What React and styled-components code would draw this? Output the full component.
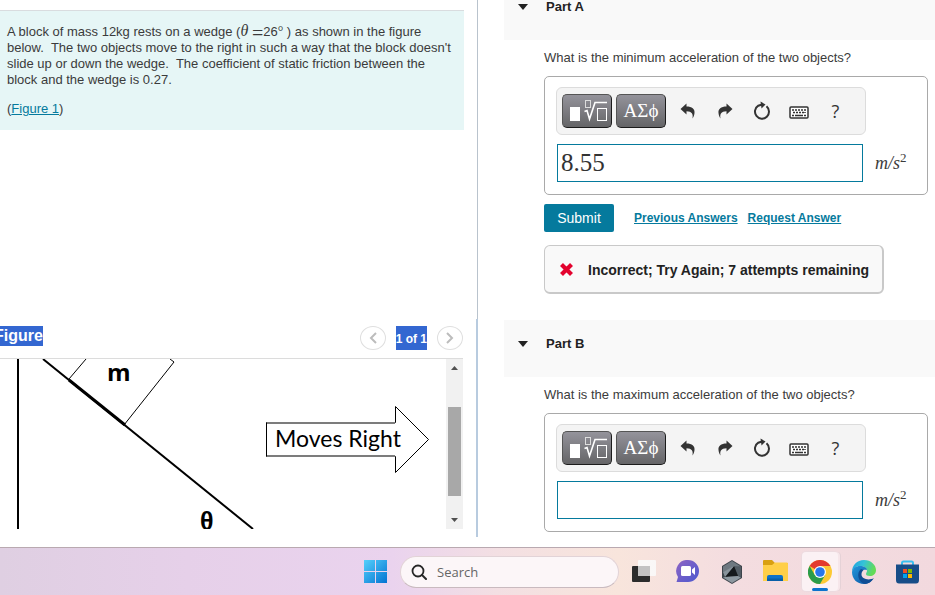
import React from "react";
import styled, { createGlobalStyle } from "styled-components";

const GlobalStyle = createGlobalStyle`
* {
  box-sizing: border-box;
}

body {
  margin: 0;
  background: #fff;
  color: #3b3b3b;
  font-family: "Liberation Sans", Arial, sans-serif;
  font-size: 13px;
  line-height: 16px;
}

button, input {
  font-family: inherit;
}
`;

const Page = styled.div`
display: flex;
flex-direction: column;
min-height: 100vh;
`;

const Main = styled.main`
flex: 1;
display: grid;
grid-template-columns: minmax(0, 478fr) minmax(0, 457fr);
overflow: hidden;
`;

/* ---------- left column ---------- */

const LeftColumn = styled.div`
display: flex;
flex-direction: column;
padding-bottom: 10px;
`;

const ProblemArea = styled.div`
flex: 1;
padding: 10px 13px 0 0;
border-right: 1px solid #b9c3cd;
`;

const Problem = styled.section`
padding: 13px 6px 13px 7px;
border-top: 1px solid #d9dcdf;
background: #e6f6f6;
white-space: pre-wrap;

p {
  margin: 0 0 13px;
}

p:last-child {
  margin: 0;
}
`;

const MathText = styled.span`
font-family: "Liberation Serif", serif;
font-size: 16px;
line-height: 0;
font-style: ${({$italic}) => ($italic ? "italic" : "normal")};
`;

const MathOperator = styled(MathText)`
font-size: 20px;
vertical-align: middle;
`;

const Degree = styled(MathText)`
font-size: 14px;
`;

const TextLink = styled.a`
color: #057a9d;
font-size: ${({$bold}) => ($bold ? "12px" : "inherit")};
font-weight: ${({$bold}) => ($bold ? "bold" : "normal")};
text-decoration: underline;
`;

const FigurePanel = styled.section`
padding: 0 13px 8px 0;
border-right: 2px solid #b8cbdf;
`;

const FigureHeader = styled.div`
display: flex;
justify-content: space-between;
align-items: flex-start;
height: 40px;
padding-top: 7px;
border-bottom: 1px solid #dcdcdc;
overflow: hidden;
`;

const FigureTitle = styled.h2`
margin: 0 0 0 -6px;
background: #3367d1;
color: #fff;
font-size: 16px;
line-height: 20px;
`;

const Pager = styled.div`
display: flex;
gap: 10px;
`;

const PagerButton = styled.button`
display: flex;
align-items: center;
justify-content: center;
width: 26px;
height: 24px;
padding: 0;
border: 1px solid #dfdfdf;
border-radius: 50%;
background: #fff;
color: #bcbcbc;
`;

const PagerCount = styled.span`
padding-top: 2px;
background: #3367d1;
color: #fff;
font-size: 12px;
font-weight: bold;
line-height: 22px;
`;

const FigureView = styled.div`
display: flex;
height: 170px;

> svg {
  flex: 1;
  min-width: 0;
}
`;

const Scrollbar = styled.div`
display: flex;
flex-direction: column;
align-items: center;
justify-content: space-between;
width: 17px;
padding: 7px 0;
background: #f1f1f1;
`;

const ScrollThumb = styled.div`
width: 13px;
height: 89px;
margin-top: 14px;
background: #a8a8a8;
`;

/* ---------- right column ---------- */

// the column is scrolled a little past the top of part A
const RightColumn = styled.div`
margin-top: -17px;
padding: 0 0 10px 26px;
`;

const PartHeader = styled.header`
display: flex;
align-items: center;
gap: 18px;
height: 57px;
padding: 0 0 10px 14px;
background: #f9f9f9;

h2 {
  margin: 0;
  color: #222;
  font-size: 13px;
}
`;

const PartBody = styled.div`
padding: 10px 7px 0 40px;
margin-bottom: ${({$last}) => ($last ? "0" : "26px")};
`;

const Question = styled.p`
margin: 0 0 10px;
`;

const AnswerBox = styled.div`
padding: 10px 18px 12px 11px;
border: 1px solid #a9a9a9;
border-radius: 5px;
`;

const Toolbar = styled.div`
display: flex;
align-items: center;
max-width: 310px;
height: 48px;
padding: 0 5px;
border: 1px solid #dcdcdc;
border-radius: 6px;
background: #f4f4f4;
`;

const Palettes = styled.div`
display: flex;
gap: 4px;
margin-right: 3px;
`;

const PaletteButton = styled.button`
display: flex;
align-items: center;
justify-content: center;
width: 50px;
height: 34px;
padding: 0;
border: 1px solid #1b1b1b;
border-top-color: #555;
border-left-color: #555;
border-radius: 5px;
background: linear-gradient(#94939b, #656567);
color: #fff;
font-family: "Liberation Serif", serif;
font-size: 19px;
`;

const ToolButton = styled.button`
display: flex;
align-items: center;
justify-content: center;
width: 37px;
height: 34px;
padding: 0;
border: 0;
background: none;
color: #333;
font-family: "Open Sans", sans-serif;
font-size: 18px;
font-weight: 500;
`;

const AnswerRow = styled.div`
display: flex;
align-items: center;
gap: 12px;
margin: 9px 0 0 1px;
`;

const AnswerInput = styled.input`
flex: 1;
min-width: 0;
height: 38px;
padding: 0 3px;
border: 1px solid #057a9d;
background: #fff;
color: #333;
font-family: "Liberation Serif", serif;
font-size: 25px;
`;

const Unit = styled.label`
width: 34px;
font-family: "Liberation Serif", serif;
font-size: 18px;
font-style: italic;
white-space: nowrap;

sup {
  font-size: 13px;
  font-style: normal;
  line-height: 0;
}
`;

const Actions = styled.div`
display: flex;
align-items: center;
gap: 10px;
margin-top: 9px;
`;

const SubmitButton = styled.button`
width: 70px;
height: 28px;
margin-right: 10px;
padding: 0;
border: 0;
border-radius: 2px;
background: #057a9d;
color: #fff;
font-size: 14px;
`;

const Feedback = styled.div`
display: inline-flex;
align-items: center;
gap: 14px;
height: 49px;
margin-top: 13px;
padding: 1px 13px 0 14px;
border: 1px solid #c9c9c9;
border-right-width: 2px;
border-bottom-width: 2px;
border-radius: 6px;
background: #f9f9f9;
color: #222;
font-size: 14px;
font-weight: bold;
`;

/* ---------- taskbar ---------- */

const Taskbar = styled.nav`
display: flex;
align-items: center;
justify-content: flex-end;
height: 48px;
padding-right: 5px;
border-top: 1px solid #b9a9b0;
background: linear-gradient(90deg, #dfcfe2 0%, #e6d0e9 20%, #ead3ee 42%, #f3dfe3 53%, #f8e5dc 66%, #f4dde0 78%, #f2d9de 100%);
`;

const SearchPill = styled.label`
display: flex;
align-items: center;
gap: 10px;
width: 219px;
height: 32px;
margin: 0 3px 0 2px;
padding: 0 10px;
border: 1px solid #e2d3d7;
border-bottom-color: #c9babf;
border-radius: 16px;
background: #fcf6f8;

svg {
  flex: none;
}

input {
  width: 100%;
  padding: 0;
  border: 0;
  outline: 0;
  background: none;
  font-family: "Open Sans", sans-serif;
  font-size: 13px;
}

input::placeholder {
  color: #666;
  opacity: 1;
}
`;

const TaskButton = styled.button`
display: flex;
align-items: center;
justify-content: center;
width: 44px;
height: 40px;
padding: 0;
border: 0;
background: none;
`;

const ActiveTask = styled.span`
display: flex;
flex-direction: column;
align-items: center;
justify-content: flex-end;
gap: 4px;
width: 36px;
height: 39px;
border-radius: 4px;
background: #fbf1f4;
box-shadow: 2px 0 0 #f6e6ea, 3px 0 0 #e5d2d7, 0 0 1px 1px #ecdbe0;
`;

const ActiveMark = styled.span`
width: 16px;
height: 3px;
border-radius: 2px;
background: #0b73cd;
`;

const Caret = ({up, small}) => (
  <svg width={small ? 7 : 10} height={small ? 4 : 6} viewBox="0 0 10 6" preserveAspectRatio="none">
    <path d={up ? "M0 6L5 0L10 6Z" : "M0 0H10L5 6Z"} fill={small ? "#505050" : "#222"} />
  </svg>
);

const Chevron = ({d}) => (
  <svg width="8" height="12" viewBox="0 0 8 12">
    <path d={d} fill="none" stroke="currentColor" strokeWidth="2" />
  </svg>
);

const RootIcon = () => (
  <svg width="40" height="24" viewBox="0 0 40 24">
    <rect x="3" y="8" width="10" height="14" fill="#fff" />
    <path d="M17.500 12.500L20 11.500L22.500 20L28 3.500H40" fill="none" stroke="#fff" strokeWidth="1.600" />
    <rect x="18.500" y="1.500" width="5" height="7" fill="none" stroke="#ddd" />
    <rect x="30.500" y="9.500" width="9" height="12" fill="none" stroke="#fff" />
  </svg>
);

const UndoIcon = ({flip}) => (
  <svg width="16" height="16" viewBox="0 0 16 16">
    <g transform={flip ? "matrix(-1 0 0 1 16 0)" : undefined}>
      <path d="M0.500 6L6.500 0.500V3.500C12 3.500 15 6 14.500 10C14.300 12 13.600 14 12.500 15.500C13.300 11 12 8.500 6.500 8.300V11.500Z" fill="currentColor" />
    </g>
  </svg>
);

const ResetIcon = () => (
  <svg width="18" height="20" viewBox="0 0 18 20">
    <path d="M13.500 5.300A7 7 0 1 1 5.300 4.700L9 3.500" fill="none" stroke="currentColor" strokeWidth="2" />
    <path d="M7.500 0.500L12.500 3.500L8.500 7.500Z" fill="currentColor" />
  </svg>
);

const KeyboardIcon = () => (
  <svg width="20" height="18" viewBox="0 0 20 18">
    <rect x="1" y="5" width="18" height="11" rx="1" fill="#fff" stroke="currentColor" strokeWidth="1.500" />
    <path d="M3 8H15M4 10.500H16M16 7V11" stroke="currentColor" strokeWidth="1.500" strokeDasharray="2 1" />
    <path d="M3 13.500H5M6 13.500H14M15 13.500H17" stroke="currentColor" strokeWidth="1.500" />
  </svg>
);

const CrossIcon = () => (
  <svg width="15" height="15" viewBox="0 0 15 15">
    <path d="M2.500 2.500L12.500 12.500M12.500 2.500L2.500 12.500" stroke="#e3032e" strokeWidth="4.200" />
  </svg>
);

const WedgeFigure = () => (
  <svg height="170" viewBox="0 0 446 170" preserveAspectRatio="xMinYMin slice" role="img" aria-label="Block on a wedge">
    <path d="M18 0V170" stroke="#000" strokeWidth="2" />
    <path d="M43 0L253 170" stroke="#000" strokeWidth="2" />
    <path d="M69 21L125 66" stroke="#000" strokeWidth="3" />
    <path d="M69 20L86 0M124 66L174 3L170 0" fill="none" stroke="#000" />
    <path d="M266.500 63.500H395.500V47.500L428.500 80.500L395.500 113.500V97.500H266.500Z" fill="#fff" stroke="#000" />
    <path d="M267 64H395M267 97H395" stroke="#7c7c7c" strokeWidth="2" />
    <text x="275" y="88" fontFamily="Lato" fontSize="23">Moves Right</text>
    <text x="107" y="22" fontFamily="Open Sans" fontSize="24" fontWeight="bold">m</text>
    <text x="200" y="171" fontFamily="Liberation Sans" fontSize="25" fontWeight="bold">θ</text>
  </svg>
);

const WindowsIcon = () => (
  <svg width="24" height="24" viewBox="0 0 24 24">
    <defs>
      <linearGradient id="win" x1="0" y1="0" x2="24" y2="24" gradientUnits="userSpaceOnUse">
        <stop stopColor="#55d0fb" />
        <stop offset="1" stopColor="#006fd0" />
      </linearGradient>
    </defs>
    <path d="M0 0H11V11H0ZM12 0H23V11H12ZM0 12H11V23H0ZM12 12H23V23H12Z" fill="url(#win)" />
  </svg>
);

const SearchIcon = () => (
  <svg width="16" height="16" viewBox="0 0 16 16">
    <circle cx="7" cy="7" r="5.500" fill="none" stroke="#262626" strokeWidth="1.800" />
    <path d="M11 11L15 15" stroke="#262626" strokeWidth="2" strokeLinecap="round" />
  </svg>
);

const TaskViewIcon = () => (
  <svg width="24" height="24" viewBox="0 0 24 24">
    <rect x="0" y="6" width="18" height="16" rx="1" fill="#2c2c2c" />
    <rect x="6" y="0" width="18" height="16" rx="1" fill="#fafafa" fillOpacity=".9" />
    <rect x="6" y="6" width="12" height="10" fill="#c3c2c2" />
  </svg>
);

const ChatIcon = () => (
  <svg width="24" height="24" viewBox="0 0 24 24">
    <defs>
      <linearGradient id="chat" x1="0" y1="0" x2="1" y2="1">
        <stop stopColor="#8f64c4" />
        <stop offset="1" stopColor="#4b58cf" />
      </linearGradient>
    </defs>
    <path d="M12 0A11 11 0 1 1 12 22H0.500L2 17A11 11 0 0 1 12 0Z" fill="url(#chat)" />
    <rect x="5" y="6" width="10" height="10" rx="1.500" fill="#fff" />
    <path d="M16 9.500L19 7V15L16 12.500Z" fill="#fff" />
  </svg>
);

const HexIcon = () => (
  <svg width="24" height="24" viewBox="0 0 24 24">
    <path d="M12 0L22 6V18L12 24L2 18V6Z" fill="#3d444b" />
    <path d="M12 1L21 6.500L14 7L3 12V6.500Z" fill="#6f7981" />
    <path d="M14 6L21 7V17L18 16Z" fill="#525c64" />
    <path d="M14 6L18 16L5 17Z" fill="#15191c" />
    <path d="M3 17.500L5 17L18 16L21 17.500L12 23Z" fill="#8d98a0" />
    <path d="M5 17L14 6L3 12Z" fill="#88939b" />
  </svg>
);

const FolderIcon = () => (
  <svg width="26" height="24" viewBox="0 0 26 24">
    <path d="M0 1Q0 0 1 0H9L12 3H24Q25 3 25 4V9H0Z" fill="#d9a011" />
    <path d="M0 5H9L12 2.500H24Q25 2.500 25 4V21H0Z" fill="#ffcf48" />
    <path d="M4 21V17Q4 15 6 15H18Q20 15 20 17V21Z" fill="#0d72c9" />
    <path d="M4 21V18.500H20V21Z" fill="#075fa8" />
  </svg>
);

const ChromeIcon = () => (
  <svg width="24" height="24" viewBox="0 0 24 24">
    <circle cx="12" cy="12" r="12" fill="#fcc934" />
    <path d="M12 12L1.600 6A12 12 0 0 1 22.400 6H12Z" fill="#e33b2e" />
    <path d="M1.600 6A12 12 0 0 0 12 24L17.200 15L12 12L6.800 15Z" fill="#2a9c4b" />
    <circle cx="12" cy="12" r="6" fill="#fff" />
    <circle cx="12" cy="12" r="4.800" fill="#2977ec" />
  </svg>
);

const EdgeIcon = () => (
  <svg width="24" height="24" viewBox="0 0 24 24">
    <defs>
      <linearGradient id="edgeTop" x1="0" y1="0" x2="1" y2="0.300">
        <stop stopColor="#1c9de0" />
        <stop offset="0.500" stopColor="#35c3d8" />
        <stop offset="1" stopColor="#63db57" />
      </linearGradient>
      <linearGradient id="edgeLow" x1="0" y1="0" x2="1" y2="1">
        <stop stopColor="#2297db" />
        <stop offset="1" stopColor="#0c51a0" />
      </linearGradient>
    </defs>
    <path d="M0 12C0 5 5 0 12 0C19 0 24 5 24 10C24 14 21 16 18 16C15 16 14 15 14 14C14 13 15 12 15 11C15 8 12 6 8 6C4 6 1 9 0 12Z" fill="url(#edgeTop)" />
    <path d="M0 12C1 8 4 6 8 6C12 6 15 8 15 10C12 9 8 11 8 15C8 20 14 22 21 19C19 22 16 24 12 24C5 24 0 19 0 12Z" fill="url(#edgeLow)" />
    <path d="M9 9C4 13 6 22 13 24C16.500 23.500 20 21.500 22 18C17 21 9 19 9.500 14C9.600 12 10.500 11 11.500 10Z" fill="#104d94" />
  </svg>
);

const StoreIcon = () => (
  <svg width="24" height="24" viewBox="0 0 24 24">
    <path d="M6 5V3Q6 1.500 7.500 1.500H15.500Q17 1.500 17 3V5" fill="none" stroke="#38bff0" strokeWidth="2" />
    <path d="M0 4.500H23V20Q23 23.500 20 23.500H3Q0 23.500 0 20Z" fill="#174d88" />
    <path d="M7 9H11V13H7Z" fill="#f25022" />
    <path d="M12 9H16V13H12Z" fill="#7fba00" />
    <path d="M7 14H11V18H7Z" fill="#00a4ef" />
    <path d="M12 14H16V18H12Z" fill="#ffb900" />
  </svg>
);

const AnswerEditor = ({id, value}) => {
  return (
    <AnswerBox>
      <Toolbar>
        <Palettes>
          <PaletteButton aria-label="Templates"><RootIcon /></PaletteButton>
          <PaletteButton aria-label="Symbols">ΑΣϕ</PaletteButton>
        </Palettes>
        <ToolButton aria-label="Undo"><UndoIcon /></ToolButton>
        <ToolButton aria-label="Redo"><UndoIcon flip /></ToolButton>
        <ToolButton aria-label="Reset"><ResetIcon /></ToolButton>
        <ToolButton aria-label="Keyboard shortcuts"><KeyboardIcon /></ToolButton>
        <ToolButton aria-label="Help">?</ToolButton>
      </Toolbar>
      <AnswerRow>
        <AnswerInput id={id} type="text" defaultValue={value} />
        <Unit htmlFor={id}>m/s<sup>2</sup></Unit>
      </AnswerRow>
    </AnswerBox>
  );
};

const Part = ({title, question, id, value, last, children}) => {
  return (
    <section>
      <PartHeader>
        <Caret />
        <h2>{title}</h2>
      </PartHeader>
      <PartBody $last={last}>
        <Question>{question}</Question>
        <AnswerEditor id={id} value={value} />
        {children}
      </PartBody>
    </section>
  );
};

const App = () => {
  return (
    <Page>
      <GlobalStyle />
      <Main>
        <LeftColumn>
          <ProblemArea>
            <Problem>
              <p>
                A block of mass 12kg rests on a wedge (<MathText $italic>θ</MathText> <MathOperator>=</MathOperator>26<Degree>°</Degree> ) as shown in the figure below.{"  "}The two objects move to the right in such a way that the block doesn't slide up or down the wedge.{"  "}The coefficient of static friction between the block and the wedge is 0.27.
              </p>
              <p>(<TextLink href="#figure">Figure 1</TextLink>)</p>
            </Problem>
          </ProblemArea>
          <FigurePanel id="figure">
            <FigureHeader>
              <FigureTitle>Figure</FigureTitle>
              <Pager>
                <PagerButton aria-label="Previous figure"><Chevron d="M7 1L2 6L7 11" /></PagerButton>
                <PagerCount>1 of 1</PagerCount>
                <PagerButton aria-label="Next figure"><Chevron d="M1 1L6 6L1 11" /></PagerButton>
              </Pager>
            </FigureHeader>
            <FigureView>
              <WedgeFigure />
              <Scrollbar>
                <Caret up small />
                <ScrollThumb />
                <Caret small />
              </Scrollbar>
            </FigureView>
          </FigurePanel>
        </LeftColumn>

        <RightColumn>
          <Part
            title="Part A"
            question="What is the minimum acceleration of the two objects?"
            id="partA"
            value="8.55"
          >
            <Actions>
              <SubmitButton>Submit</SubmitButton>
              <TextLink $bold href="#previous">Previous Answers</TextLink>
              <TextLink $bold href="#request">Request Answer</TextLink>
            </Actions>
            <Feedback>
              <CrossIcon />
              Incorrect; Try Again; 7 attempts remaining
            </Feedback>
          </Part>
          <Part
            title="Part B"
            question="What is the maximum acceleration of the two objects?"
            id="partB"
            last
          />
        </RightColumn>
      </Main>

      <Taskbar>
        <TaskButton aria-label="Start"><WindowsIcon /></TaskButton>
        <SearchPill>
          <SearchIcon />
          <input type="text" placeholder="Search" aria-label="Search" />
        </SearchPill>
        <TaskButton aria-label="Task view"><TaskViewIcon /></TaskButton>
        <TaskButton aria-label="Chat"><ChatIcon /></TaskButton>
        <TaskButton aria-label="Vantage"><HexIcon /></TaskButton>
        <TaskButton aria-label="File Explorer"><FolderIcon /></TaskButton>
        <TaskButton aria-label="Chrome">
          <ActiveTask>
            <ChromeIcon />
            <ActiveMark />
          </ActiveTask>
        </TaskButton>
        <TaskButton aria-label="Edge"><EdgeIcon /></TaskButton>
        <TaskButton aria-label="Store"><StoreIcon /></TaskButton>
      </Taskbar>
    </Page>
  );
};

export default App;
